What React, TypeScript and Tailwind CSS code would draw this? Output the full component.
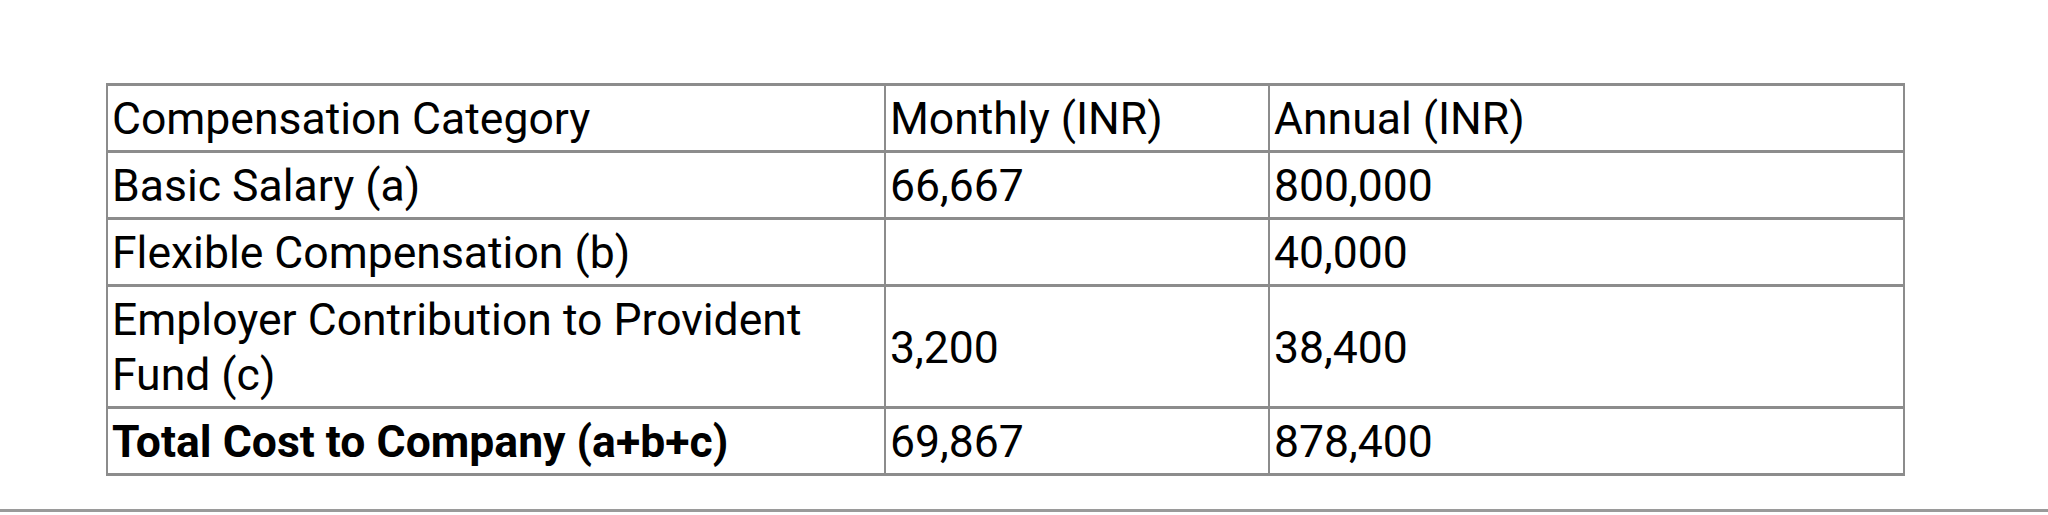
const rows: { label: string; monthly: string; annual: string; bold?: boolean }[] = [
  { label: "Basic Salary (a)", monthly: "66,667", annual: "800,000" },
  { label: "Flexible Compensation (b)", monthly: "", annual: "40,000" },
  { label: "Employer Contribution to Provident Fund (c)", monthly: "3,200", annual: "38,400" },
  { label: "Total Cost to Company (a+b+c)", monthly: "69,867", annual: "878,400", bold: true },
];

// shared cell box: thin grey rules, text hugging the left edge
const cell =
  "border-x-2 border-y-[3px] border-[#8c8c8c] pl-[4px] pr-[4px] pt-[6px] pb-[3px] align-middle text-left";

export default function App() {
  return (
    <div
      className="flex h-[515px] w-[2048px] flex-col bg-white text-black"
      style={{ fontFamily: "Roboto, 'Liberation Sans', sans-serif" }}
    >
      <div className="pl-[106px] pt-[83px]">
        <table className="w-[1797px] table-fixed border-collapse text-[44.5px] leading-[55px]">
          <colgroup>
            <col className="w-[778px]" />
            <col className="w-[384px]" />
            <col className="w-[635px]" />
          </colgroup>
          <thead>
            <tr>
              <th className={`${cell} font-normal`}>Compensation Category</th>
              <th className={`${cell} font-normal`}>Monthly (INR)</th>
              <th className={`${cell} font-normal`}>Annual (INR)</th>
            </tr>
          </thead>
          <tbody>
            {rows.map((r) => (
              <tr key={r.label}>
                <td className={r.bold ? `${cell} font-bold` : cell}>{r.label}</td>
                <td className={cell}>{r.monthly}</td>
                <td className={cell}>{r.annual}</td>
              </tr>
            ))}
          </tbody>
        </table>
      </div>
      <div className="mt-auto mb-[3px] h-[3px] w-full bg-[#9a9a9a]" />
    </div>
  );
}
